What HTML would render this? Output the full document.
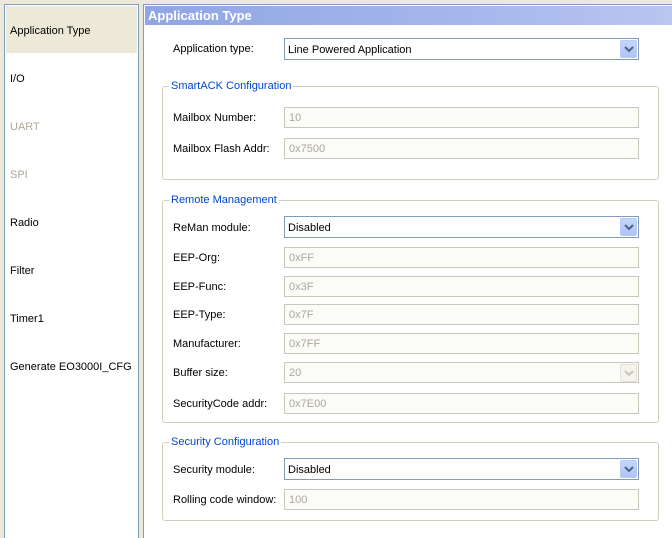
<!DOCTYPE html>
<html style="overflow:hidden;height:538px"><head><style>
*{margin:0;padding:0;box-sizing:border-box}
body{width:672px;height:538px;background:#ece9d8;font-family:"Liberation Sans",sans-serif;font-size:11px;color:#000;position:relative;overflow:hidden}
.a{position:absolute}
#left{left:4px;top:4px;width:135px;height:560px;background:#fff;border:1px solid #7f9db9}
.it{position:absolute;left:6px;white-space:nowrap}
#sel{left:6px;top:6px;width:131px;height:47px;background:#ece9d8}
#right{left:143px;top:4px;width:535px;height:560px;background:#fff;border:1px solid #7f9db9}
#hdr{left:145px;top:6px;width:527px;height:19px;background:linear-gradient(90deg,#8fa6e2,#a6b6ec 60%,#b8c6f0);color:#fff;font-weight:bold;font-size:13px;line-height:19px;padding-left:3px}
.fs{position:absolute;left:162px;width:497px;border:1px solid #d0d0bf;border-radius:3px}
.lg{position:absolute;left:169px;background:#fff;color:#0046d5;padding:0 2px;line-height:13px}
.lb{position:absolute;left:173px;line-height:13px}
.in{position:absolute;left:284px;width:355px;height:21px;border:1px solid #c9c7ba;background:#fbfbf8;color:#aca899;line-height:20px;padding-left:4px}
.cb{position:absolute;left:284px;width:355px;height:22px;border:1px solid #7f9db9;background:#fff;line-height:22px;padding-left:3px}
.btn{position:absolute;right:1px;top:1px;width:17px;height:18px;background:linear-gradient(#c6d6fb,#aec4f7);border:1px solid #b9cbf5;border-radius:2px}
.btn svg{position:absolute;left:3px;top:4px}
.dis .btn{background:#f4f3ee;border-color:#e3e1d8}
</style></head><body>
<div class="a" id="left"></div>
<div class="a" id="sel"></div>
<div class="it" style="top:25px;left:10px">Application Type</div>
<div class="it" style="top:73px;left:10px">I/O</div>
<div class="it" style="top:121px;left:10px;color:#aca899">UART</div>
<div class="it" style="top:169px;left:10px;color:#aca899">SPI</div>
<div class="it" style="top:217px;left:10px">Radio</div>
<div class="it" style="top:265px;left:10px">Filter</div>
<div class="it" style="top:313px;left:10px">Timer1</div>
<div class="it" style="top:361px;left:10px">Generate EO3000I_CFG</div>
<div class="a" id="right"></div>
<div class="a" id="hdr">Application Type</div>

<div class="lb" style="top:43px">Application type:</div>
<div class="cb" style="top:38px">Line Powered Application<div class="btn"><svg width="10" height="8"><path d="M1 2L5 6L9 2" stroke="#4d6185" stroke-width="2" fill="none"/></svg></div></div>

<div class="fs" style="top:86px;height:94px"></div>
<div class="lg" style="top:80px">SmartACK Configuration</div>
<div class="lb" style="top:112px">Mailbox Number:</div>
<div class="in" style="top:107px">10</div>
<div class="lb" style="top:143px">Mailbox Flash Addr:</div>
<div class="in" style="top:138px">0x7500</div>

<div class="fs" style="top:200px;height:223px"></div>
<div class="lg" style="top:194px">Remote Management</div>
<div class="lb" style="top:222px">ReMan module:</div>
<div class="cb" style="top:216px">Disabled<div class="btn"><svg width="10" height="8"><path d="M1 2L5 6L9 2" stroke="#4d6185" stroke-width="2" fill="none"/></svg></div></div>
<div class="lb" style="top:252px">EEP-Org:</div>
<div class="in" style="top:247px">0xFF</div>
<div class="lb" style="top:281px">EEP-Func:</div>
<div class="in" style="top:276px">0x3F</div>
<div class="lb" style="top:309px">EEP-Type:</div>
<div class="in" style="top:304px">0x7F</div>
<div class="lb" style="top:338px">Manufacturer:</div>
<div class="in" style="top:333px">0x7FF</div>
<div class="lb" style="top:367px">Buffer size:</div>
<div class="in dis" style="top:362px">20<div class="btn"><svg width="10" height="8"><path d="M1 2L5 6L9 2" stroke="#c9c7ba" stroke-width="2" fill="none"/></svg></div></div>
<div class="lb" style="top:398px">SecurityCode addr:</div>
<div class="in" style="top:393px">0x7E00</div>

<div class="fs" style="top:442px;height:79px"></div>
<div class="lg" style="top:436px">Security Configuration</div>
<div class="lb" style="top:464px">Security module:</div>
<div class="cb" style="top:458px">Disabled<div class="btn"><svg width="10" height="8"><path d="M1 2L5 6L9 2" stroke="#4d6185" stroke-width="2" fill="none"/></svg></div></div>
<div class="lb" style="top:494px">Rolling code window:</div>
<div class="in" style="top:489px">100</div>
</body></html>
